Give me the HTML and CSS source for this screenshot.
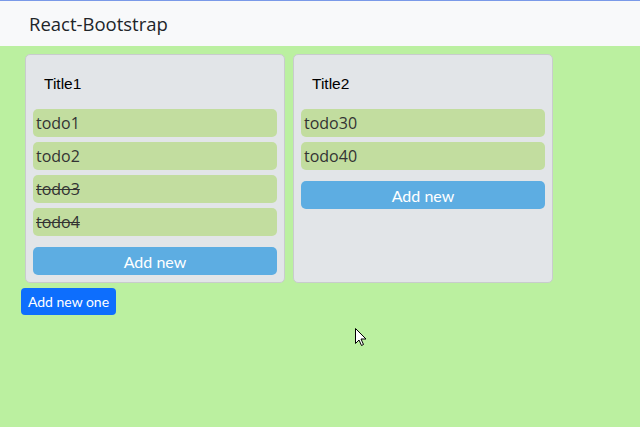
FILE: index.html
```html
<!DOCTYPE html>
<html>
<head>
<meta charset="utf-8">
<link rel="stylesheet" href="styles.css">
</head>
<body>
<nav class="navbar"><span class="brand">React-Bootstrap</span></nav>
<main class="main">
  <div class="board">
    <div class="card">
      <div class="card-title">Title1</div>
      <div class="items">
        <div class="item">todo1</div>
        <div class="item">todo2</div>
        <div class="item done">todo3</div>
        <div class="item done">todo4</div>
      </div>
      <button class="add">Add new</button>
    </div>
    <div class="card">
      <div class="card-title">Title2</div>
      <div class="items">
        <div class="item">todo30</div>
        <div class="item">todo40</div>
      </div>
      <button class="add">Add new</button>
    </div>
  </div>
  <button class="add-one">Add new one</button>
</main>
<svg class="cursor" width="12" height="19" viewBox="0 0 12 19"><path d="M0.5 0.5 L0.5 15.5 L4 12 L6.5 17.5 L8.5 16.5 L6 11 L11 11 Z" fill="#fff" stroke="#000" stroke-width="1"/></svg>
</body>
</html>
```
FILE: styles.css
```css
html, body { margin: 0; padding: 0; }
body {
  background: #bbf0a0;
  font-family: "Open Sans", "Noto Sans", sans-serif;
  width: 640px;
  height: 427px;
  overflow: hidden;
  position: relative;
}
.navbar {
  height: 45px;
  border-top: 1px solid #7a9ae8;
  background: #f8f9fa;
  display: flex;
  align-items: center;
  padding-left: 29px;
}
.brand {
  font-size: 18.5px;
  color: #212529;
}
.main {
  padding: 8px 0 0 21px;
}
.board {
  display: flex;
  gap: 8px;
  padding-left: 4px;
}
.card {
  width: 244px;
  padding: 7px;
  background: #e2e5e8;
  border: 1px solid #c8cccc;
  border-radius: 5px;
  height: 213px;
  display: flex;
  flex-direction: column;
}
.card-title {
  font-family: "Liberation Sans", Arial, sans-serif;
  font-size: 15.5px;
  line-height: 18px;
  color: #000;
  padding: 13px 11px 12px;
  margin-bottom: 4px;
}
.items {
  display: flex;
  flex-direction: column;
  gap: 5px;
}
.item {
  height: 28px;
  line-height: 28px;
  background: #c2dd9f;
  border-radius: 5px;
  padding-left: 3px;
  font-size: 16px;
  color: #333;
}
.item.done { text-decoration: line-through; }
.add {
  margin-top: 11px;
  height: 28px;
  border: none;
  border-radius: 5px;
  background: #5dade2;
  color: #fff;
  font-family: Lato, sans-serif;
  font-size: 16px;
  padding: 0;
}
.add-one {
  margin-top: 5px;
  height: 27px;
  width: 95px;
  border: none;
  border-radius: 4px;
  background: #0d6efd;
  color: #fff;
  font-family: Lato, sans-serif;
  font-size: 14px;
  padding: 0;
}
.cursor {
  position: absolute;
  left: 355px;
  top: 328px;
}
```
